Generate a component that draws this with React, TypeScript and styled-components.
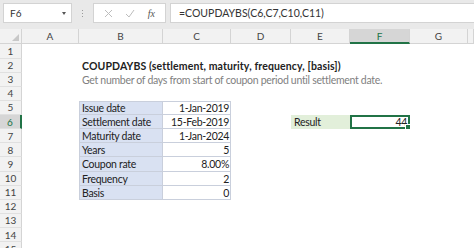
import React from "react";
import styled, { createGlobalStyle, css } from "styled-components";

const GlobalStyle = createGlobalStyle`
  html, body { margin: 0; padding: 0; background: #ffffff; overflow: hidden; }
  body { width: 474px; height: 248px; font-family: Lato, "Open Sans", sans-serif; }
`;

const Page = styled.div`
  width: 474px;
  height: 248px;
  overflow: hidden;
  display: flex;
  flex-direction: column;
`;

const Toolbar = styled.div`
  height: 29px;
  flex: none;
  background: #e9e9e9;
  display: flex;
  align-items: flex-start;
  padding: 3px 0 0 3px;
  box-sizing: border-box;
`;

const NameBox = styled.div`
  width: 69px;
  height: 20px;
  box-sizing: border-box;
  background: #fff;
  border: 1px solid #d3d3d3;
  display: flex;
  align-items: center;
  justify-content: space-between;
  padding: 0 5px 0 6px;
  font-size: 10px;
  color: #333;
`;

const Caret = styled.span`
  width: 0;
  height: 0;
  border-left: 2.5px solid transparent;
  border-right: 2.5px solid transparent;
  border-top: 3px solid #555;
`;

const Grip = styled.div`
  width: 21px;
  height: 20px;
  display: flex;
  flex-direction: column;
  align-items: center;
  justify-content: center;
  gap: 2px;
  & > span { width: 1px; height: 1px; background: #9a9a9a; }
`;

const FxBox = styled.div`
  width: 73px;
  height: 20px;
  box-sizing: border-box;
  background: #fff;
  border: 1px solid #d3d3d3;
  display: flex;
  align-items: center;
  justify-content: space-around;
  padding: 0 4px;
  color: #b8b8b8;
`;

const FxLabel = styled.span`
  font-family: "Liberation Serif", serif;
  font-style: italic;
  font-size: 10px;
  color: #555;
`;

const FormulaBox = styled.div`
  flex: 1;
  height: 20px;
  margin-left: 4px;
  box-sizing: border-box;
  background: #fff;
  border: 1px solid #d3d3d3;
  border-right: none;
  display: flex;
  align-items: center;
  padding-left: 8px;
  font-size: 10.5px;
  color: #333;
  white-space: nowrap;
`;

const Sheet = styled.div`
  display: grid;
  grid-template-columns: 22px 57px 84px 68px 60px 59px 60px 58px 1fr;
  grid-template-rows: 15.4px repeat(15, 14.14px);
  font-size: 10.5px;
  color: #222;
`;

const Corner = styled.div`
  background: #f2f2f2;
  border-right: 1px solid #d4d4d4;
  border-bottom: 1px solid #d4d4d4;
  position: relative;
  &::after {
    content: "";
    position: absolute;
    right: 2px;
    bottom: 2px;
    border-left: 7px solid transparent;
    border-bottom: 7px solid #c8c8c8;
  }
`;

const ColHead = styled.div<{ $sel?: boolean }>`
  background: ${(p) => (p.$sel ? "#d6d6d6" : "#f2f2f2")};
  border-right: 1px solid #d4d4d4;
  border-bottom: ${(p) => (p.$sel ? "2px solid #217346" : "1px solid #d4d4d4")};
  box-sizing: border-box;
  display: flex;
  align-items: center;
  justify-content: center;
  font-size: 10px;
  color: ${(p) => (p.$sel ? "#217346" : "#444")};
`;

const RowHead = styled.div<{ $sel?: boolean }>`
  background: ${(p) => (p.$sel ? "#d6d6d6" : "#f2f2f2")};
  border-right: ${(p) => (p.$sel ? "2px solid #217346" : "1px solid #d4d4d4")};
  border-bottom: 1px solid #e0e0e0;
  box-sizing: border-box;
  display: flex;
  align-items: center;
  justify-content: center;
  font-size: 10px;
  color: ${(p) => (p.$sel ? "#217346" : "#444")};
`;

type Fill = "none" | "blue" | "green";

const Cell = styled.div<{
  $fill?: Fill;
  $right?: boolean;
  $boxed?: boolean;
  $top?: boolean;
  $left?: boolean;
  $bold?: boolean;
  $muted?: boolean;
  $selected?: boolean;
}>`
  position: relative;
  box-sizing: border-box;
  display: flex;
  align-items: center;
  justify-content: ${(p) => (p.$right ? "flex-end" : "flex-start")};
  padding: 0 2px 0 3px;
  white-space: nowrap;
  overflow: visible;
  font-weight: ${(p) => (p.$bold ? 700 : 400)};
  letter-spacing: ${(p) => (p.$bold ? "0.12px" : "-0.3px")};
  color: ${(p) => (p.$muted ? "#7f7f7f" : "#222")};
  background: ${(p) =>
    p.$fill === "blue" ? "#d9e1f2" : p.$fill === "green" ? "#e2efda" : "transparent"};
  ${(p) =>
    p.$boxed &&
    css`
      box-shadow: inset -1px -1px 0 #c9cfdc
        ${p.$top ? ", inset 0 1px 0 #c9cfdc" : ""}
        ${p.$left ? ", inset 1px 0 0 #c9cfdc" : ""};
    `}
  ${(p) =>
    p.$selected &&
    css`
      border: 2px solid #217346;
      padding: 0 1px 0 2px;
    `}
`;

const FillHandle = styled.span`
  position: absolute;
  right: -3px;
  bottom: -3px;
  width: 4px;
  height: 4px;
  background: #217346;
  border: 1px solid #fff;
`;

const Cross = () => (
  <svg width="9" height="9" viewBox="0 0 9 9">
    <path d="M1 1 L8 8 M8 1 L1 8" stroke="#bdbdbd" strokeWidth="1" fill="none" />
  </svg>
);

const Check = () => (
  <svg width="10" height="9" viewBox="0 0 10 9">
    <path d="M1 5 L4 8 L9 1" stroke="#bdbdbd" strokeWidth="1" fill="none" />
  </svg>
);

const cols = ["A", "B", "C", "D", "E", "F", "G", ""];

const table: [string, string][] = [
  ["Issue date", "1-Jan-2019"],
  ["Settlement date", "15-Feb-2019"],
  ["Maturity date", "1-Jan-2024"],
  ["Years", "5"],
  ["Coupon rate", "8.00%"],
  ["Frequency", "2"],
  ["Basis", "0"],
];

export default function App() {
  const rows: React.ReactNode[] = [];
  for (let r = 1; r <= 15; r++) {
    rows.push(
      <RowHead key={`rh${r}`} $sel={r === 6}>
        {r}
      </RowHead>
    );
    for (let c = 0; c < 8; c++) {
      const key = `c${r}-${c}`;
      if (r === 2 && c === 1) {
        rows.push(
          <Cell key={key} $bold>
            COUPDAYBS (settlement, maturity, frequency, [basis])
          </Cell>
        );
      } else if (r === 3 && c === 1) {
        rows.push(
          <Cell key={key} $muted>
            Get number of days from start of coupon period until settlement date.
          </Cell>
        );
      } else if (r >= 5 && r <= 11 && (c === 1 || c === 2)) {
        const [label, value] = table[r - 5];
        rows.push(
          <Cell
            key={key}
            $boxed
            $top={r === 5}
            $left={c === 1}
            $fill={c === 1 ? "blue" : "none"}
            $right={c === 2}
          >
            {c === 1 ? label : value}
          </Cell>
        );
      } else if (r === 6 && c === 4) {
        rows.push(
          <Cell key={key} $fill="green">
            Result
          </Cell>
        );
      } else if (r === 6 && c === 5) {
        rows.push(
          <Cell key={key} $right $selected>
            44
            <FillHandle />
          </Cell>
        );
      } else {
        rows.push(<Cell key={key} />);
      }
    }
  }

  return (
    <Page>
      <GlobalStyle />
      <Toolbar>
        <NameBox>
          <span>F6</span>
          <Caret />
        </NameBox>
        <Grip>
          <span />
          <span />
          <span />
        </Grip>
        <FxBox>
          <Cross />
          <Check />
          <FxLabel>fx</FxLabel>
        </FxBox>
        <FormulaBox>=COUPDAYBS(C6,C7,C10,C11)</FormulaBox>
      </Toolbar>
      <Sheet>
        <Corner />
        {cols.map((c, i) => (
          <ColHead key={i} $sel={c === "F"}>
            {c}
          </ColHead>
        ))}
        {rows}
      </Sheet>
    </Page>
  );
}
